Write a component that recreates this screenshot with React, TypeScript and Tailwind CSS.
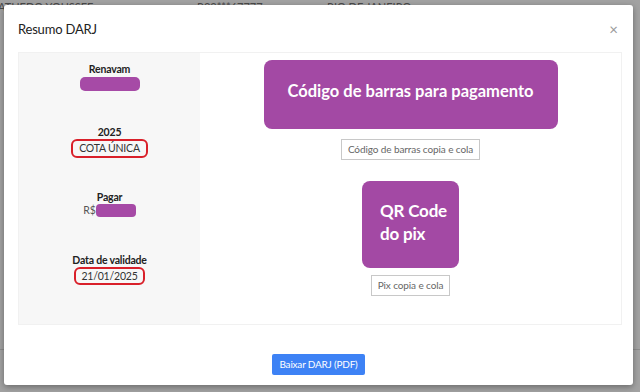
export default function App() {
  return (
    <div className="relative h-[392px] w-[640px] overflow-hidden bg-[#a2a2a2] font-['Lato',sans-serif]">
      {/* page behind the overlay */}
      <div className="flex h-[8px] items-end text-[11px] leading-none text-[#4a4a4a]">
        <span className="ml-[-2px] w-[199px] translate-y-[4px]">ATHEDO YOUSSEF</span>
        <span className="w-[130px] translate-y-[4px]">R33***67777</span>
        <span className="translate-y-[4px]">RIO DE JANEIRO</span>
      </div>
      <div className="mt-[341px] h-px w-full bg-[#8c8c8c]" />

      <div className="absolute left-[4px] top-[5px] flex h-[380px] w-[629px] flex-col rounded-[3px] bg-white shadow-[0_2px_6px_rgba(0,0,0,0.35)]">
        <div className="flex h-[47px] items-center justify-between pl-[14px] pr-[15px] pt-[2px]">
          <h1 className="text-[13px] tracking-[-0.2px] text-[#222]">Resumo DARJ</h1>
          <span className="text-[15px] leading-none text-[#9a9a9a]">×</span>
        </div>

        <div className="ml-[14px] flex h-[273px] w-[604px] border border-[#f1f1f1]">
          <div className="flex w-[181px] flex-col items-center bg-[#f7f7f7] pt-[10px] text-[10.5px] leading-[13px] tracking-[-0.2px] text-[#333]">
            <p className="font-bold text-[#222]">Renavam</p>
            <div className="mt-[1px] h-[14px] w-[60px] rounded-[5px] bg-[#a64aa6]" />

            <p className="mt-[35px] font-bold text-[#222]">2025</p>
            <div className="rounded-[6px] border-[2px] border-[#d9202a] px-[6px] leading-[15px]">COTA ÚNICA</div>

            <p className="mt-[33px] font-bold text-[#222]">Pagar</p>
            <div className="flex items-center">
              <span className="text-[#555]">R$</span>
              <div className="h-[13px] w-[40px] rounded-[4px] bg-[#a64aa6]" />
            </div>

            <p className="mt-[37px] font-bold text-[#222]">Data de validade</p>
            <div className="rounded-[6px] border-[2px] border-[#d9202a] px-[5px] leading-[14px]">21/01/2025</div>
          </div>

          <div className="flex flex-1 flex-col items-center pt-[7px]">
            <div className="flex h-[69px] w-[294px] items-start justify-center rounded-[8px] bg-[#a349a4] pt-[19px] text-[16.5px] font-bold text-white">
              Código de barras para pagamento
            </div>
            <button className="mt-[10px] h-[21px] border border-[#c8c8c8] bg-white px-[6px] text-[10px] tracking-[-0.1px] text-[#666]">
              Código de barras copia e cola
            </button>

            <div className="mt-[21px] flex h-[87px] w-[97px] flex-col justify-center rounded-[8px] bg-[#a349a4] pl-[18px] pb-[6px] text-[17px] font-bold leading-[23px] tracking-[-0.2px] text-white">
              <span>QR Code</span>
              <span>do pix</span>
            </div>
            <button className="mt-[7px] h-[21px] border border-[#c8c8c8] bg-white px-[6px] text-[10px] tracking-[-0.1px] text-[#666]">
              Pix copia e cola
            </button>
          </div>
        </div>

        <div className="flex flex-1 items-start justify-center pt-[29px]">
          <button className="h-[21px] rounded-[2px] bg-[#3d82f5] px-[7px] text-[10px] tracking-[-0.2px] text-white">Baixar DARJ (PDF)</button>
        </div>
      </div>
    </div>
  );
}
